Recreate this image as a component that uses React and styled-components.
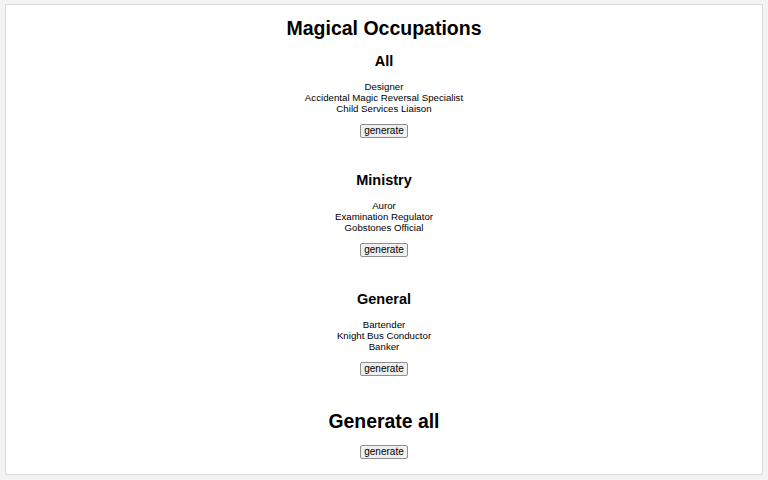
import React, { useState } from 'react';
import styled, { createGlobalStyle } from 'styled-components';

const occupations = {
    All: ['Designer', 'Accidental Magic Reversal Specialist', 'Child Services Liaison'],
    Ministry: ['Auror', 'Examination Regulator', 'Gobstones Official'],
    General: ['Bartender', 'Knight Bus Conductor', 'Banker'],
};

function Category ({ name }) {
    let [list] = useState(occupations[name]);

    return (
        <Section>
            <CategoryTitle>{name}</CategoryTitle>
            <JobList>
                {list.map(job => <Job key={job}>{job}</Job>)}
            </JobList>
            <GenerateButton>generate</GenerateButton>
        </Section>
    );
}

function App () {
    return (
        <>
            <GlobalStyle />
            <Card>
                <PageTitle>Magical Occupations</PageTitle>
                {Object.keys(occupations).map(name => <Category key={name} name={name} />)}
                <AllTitle>Generate all</AllTitle>
                <GenerateButton>generate</GenerateButton>
            </Card>
        </>
    );
}

const GlobalStyle = createGlobalStyle`
    html, body {
        margin: 0;
        background: #f3f3f3;
        font-family: 'Liberation Sans', Arial, sans-serif;
        color: #000;
    }
    body {
        padding: 4px 5px;
    }
`;

const Card = styled.div`
    background: #fff;
    border: 1px solid #dcdcdc;
    height: 471px;
    box-sizing: border-box;
    display: flex;
    flex-direction: column;
    align-items: center;
    padding-top: 12px;
`;

const PageTitle = styled.h1`
    font-size: 19.5px;
    font-weight: bold;
    margin: 0 0 12px;
    line-height: 23px;
`;

const Section = styled.div`
    display: flex;
    flex-direction: column;
    align-items: center;
    margin-bottom: 33px;

    &:nth-of-type(3) {
        margin-bottom: 34px;
    }
`;

const CategoryTitle = styled.h2`
    font-size: 14.5px;
    font-weight: bold;
    margin: 0 0 11px;
    line-height: 18px;
`;

const JobList = styled.div`
    display: flex;
    flex-direction: column;
    align-items: center;
    margin-bottom: 10px;
`;

const Job = styled.span`
    font-size: 9.7px;
    line-height: 11px;
`;

const AllTitle = styled.h2`
    font-size: 19.4px;
    font-weight: bold;
    margin: 0 0 13px;
    line-height: 22px;
`;

const GenerateButton = styled.button`
    font-family: 'Liberation Sans', Arial, sans-serif;
    font-size: 10px;
    line-height: 12px;
    padding: 0 3px;
    height: 14px;
    color: #000;
    background: #efefef;
    border: 1px solid #8f8f8f;
    border-radius: 2px;
`;

export default App;
